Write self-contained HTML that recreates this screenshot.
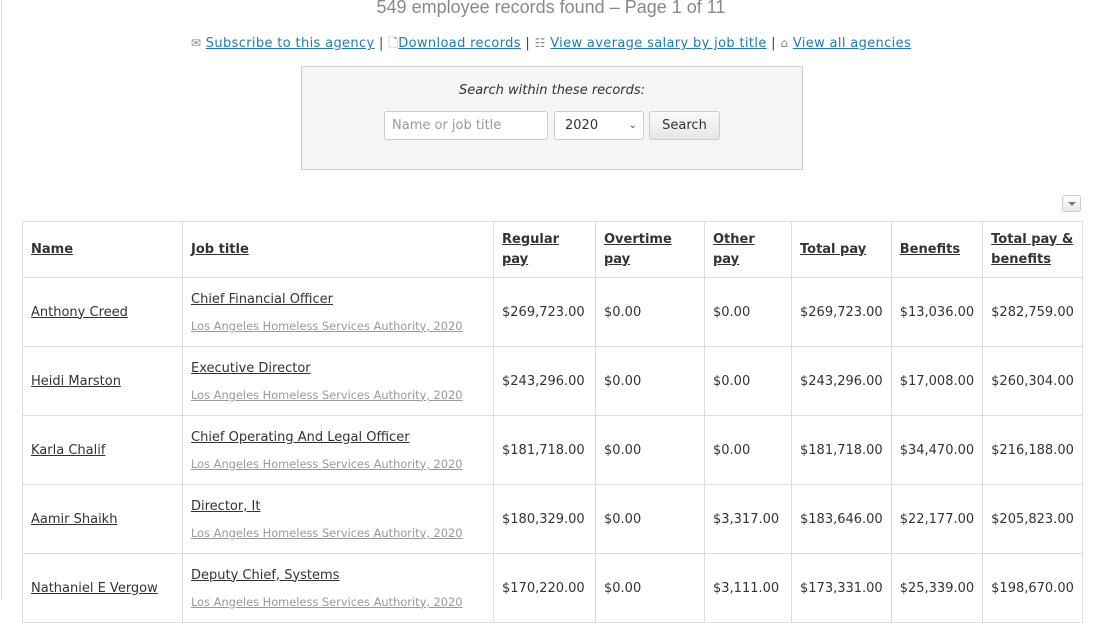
<!DOCTYPE html>
<html><head><meta charset="utf-8"><style>
body{margin:0;width:1096px;height:600px;overflow:hidden;background:#fff;font-family:"DejaVu Sans",Verdana,sans-serif;font-size:13px;color:#333;position:relative}
.lb{position:absolute;left:1px;top:0;width:1px;height:600px;background:#ddd}
h1{position:absolute;top:-3px;left:0;width:1102px;text-align:center;margin:0;font:18px "Liberation Sans",sans-serif;color:#888}
.links{position:absolute;top:34px;left:0;width:1102px;text-align:center;font-size:13px;color:#444;letter-spacing:0.35px}
.links a{color:#1f7ab8;text-decoration:underline}
.ic{color:#888;font-size:12px}
.box{position:absolute;left:301px;top:66px;width:500px;height:102px;border:1px solid #ccc;background:#f5f5f5}
.box .t{position:absolute;top:16px;width:100%;text-align:center;font-style:italic;font-size:13px}
.inp{position:absolute;top:44px;height:29px;border:1px solid #ccc;border-radius:3px;background:#fff;box-sizing:border-box;font-size:13px;line-height:27px}
.btn{position:absolute;left:347px;top:44px;width:71px;height:29px;box-sizing:border-box;border:1px solid #ccc;border-radius:3px;background:linear-gradient(#fafafa,#e6e6e6);text-align:center;line-height:27px;font-size:13px}
.dd{position:absolute;left:1062px;top:195px;width:19px;height:17px;border:1px solid #ccc;border-radius:3px;background:linear-gradient(#fff,#e8e8e8);box-sizing:border-box}
.dd:after{content:"";position:absolute;left:5px;top:6px;border-left:4px solid transparent;border-right:4px solid transparent;border-top:4px solid #777}
table{position:absolute;left:22px;top:221px;border-collapse:collapse;table-layout:fixed}
td,th{border:1px solid #ddd;padding:0 8px;vertical-align:middle;text-align:left}
th{height:55px;font-weight:bold;line-height:20px}
th a{color:#333;text-decoration:underline}
td{height:68px}
a{color:#333;text-decoration:underline}
.sub{display:block;margin-top:12px;font-size:11.4px;color:#999;text-decoration:underline}
.jt{display:block;margin-top:0px}
</style></head><body>
<div class="lb"></div>
<h1>549 employee records found – Page 1 of 11</h1>
<div class="links"><span class="ic">✉</span> <a>Subscribe to this agency</a> | <span class="ic">🗋</span><a>Download records</a> | <span class="ic">☷</span> <a>View average salary by job title</a> | <span class="ic">⌂</span> <a>View all agencies</a></div>
<div class="box"><div class="t">Search within these records:</div>
<div class="inp" style="left:82px;width:164px;color:#999;padding-left:7px">Name or job title</div>
<div class="inp" style="left:252px;width:90px;padding-left:10px">2020<span style="position:absolute;right:6px;top:0;font-size:10px;color:#555">⌄</span></div>
<div class="btn">Search</div></div>
<div class="dd"></div>
<table>
<colgroup><col style="width:160px"><col style="width:311px"><col style="width:102px"><col style="width:109px"><col style="width:87px"><col style="width:98px"><col style="width:91px"><col style="width:99px"></colgroup>
<tr><th><a>Name</a></th><th><a>Job title</a></th><th><a>Regular pay</a></th><th><a>Overtime pay</a></th><th><a>Other pay</a></th><th><a>Total pay</a></th><th><a>Benefits</a></th><th><a>Total pay &amp; benefits</a></th></tr>
<tr><td><a>Anthony Creed</a></td><td><a class="jt">Chief Financial Officer</a><a class="sub">Los Angeles Homeless Services Authority, 2020</a></td><td>$269,723.00</td><td>$0.00</td><td>$0.00</td><td>$269,723.00</td><td>$13,036.00</td><td>$282,759.00</td></tr>
<tr><td><a>Heidi Marston</a></td><td><a class="jt">Executive Director</a><a class="sub">Los Angeles Homeless Services Authority, 2020</a></td><td>$243,296.00</td><td>$0.00</td><td>$0.00</td><td>$243,296.00</td><td>$17,008.00</td><td>$260,304.00</td></tr>
<tr><td><a>Karla Chalif</a></td><td><a class="jt">Chief Operating And Legal Officer</a><a class="sub">Los Angeles Homeless Services Authority, 2020</a></td><td>$181,718.00</td><td>$0.00</td><td>$0.00</td><td>$181,718.00</td><td>$34,470.00</td><td>$216,188.00</td></tr>
<tr><td><a>Aamir Shaikh</a></td><td><a class="jt">Director, It</a><a class="sub">Los Angeles Homeless Services Authority, 2020</a></td><td>$180,329.00</td><td>$0.00</td><td>$3,317.00</td><td>$183,646.00</td><td>$22,177.00</td><td>$205,823.00</td></tr>
<tr><td><a>Nathaniel E Vergow</a></td><td><a class="jt">Deputy Chief, Systems</a><a class="sub">Los Angeles Homeless Services Authority, 2020</a></td><td>$170,220.00</td><td>$0.00</td><td>$3,111.00</td><td>$173,331.00</td><td>$25,339.00</td><td>$198,670.00</td></tr>
</table>
</body></html>
